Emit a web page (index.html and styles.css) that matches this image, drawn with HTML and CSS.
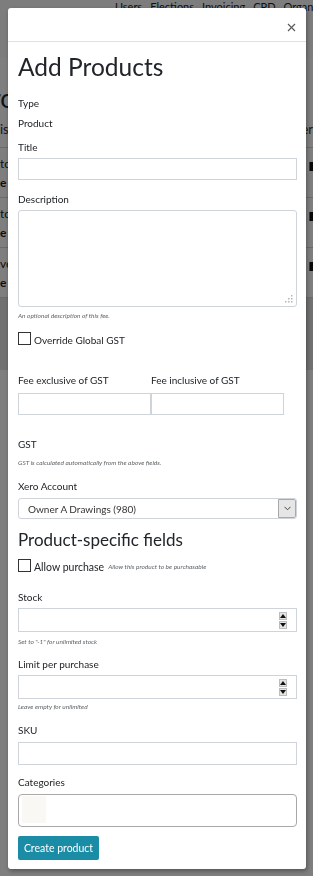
FILE: index.html
```html
<!DOCTYPE html>
<html lang="en">
<head>
<meta charset="utf-8">
<title>Add Products</title>
<link rel="stylesheet" href="styles.css">
</head>
<body>
<div class="page">
  <nav class="topnav">
    <span>Users</span><span>Elections</span><span>Invoicing</span><span>CPD</span><span>Organisations</span>
  </nav>
  <div class="page-head">
    <div class="page-title">Products</div>
    <div class="page-sub"><span>is</span><span>er</span></div>
  </div>
  <div class="rows">
    <div class="row"><div class="cell"><span>to</span><span>e</span></div><span class="trash"></span></div>
    <div class="row"><div class="cell"><span>to</span><span>e</span></div><span class="trash"></span></div>
    <div class="row"><div class="cell"><span>ve</span><span>e</span></div><span class="trash"></span></div>
  </div>
  <div class="band"></div>
</div>

<div class="backdrop"></div>

<div class="modal">
  <div class="modal-header">
    <svg class="close" width="9" height="9" viewBox="0 0 9 9"><path d="M1 1 L8 8 M8 1 L1 8" stroke="#5a5a5a" stroke-width="1.2" fill="none"/></svg>
  </div>
  <div class="modal-body">
    <h1 class="title">Add Products</h1>

    <div class="label mt-type">Type</div>
    <div class="label mt-product">Product</div>

    <div class="label mt-title">Title</div>
    <div class="input mt-4"></div>

    <div class="label mt-12">Description</div>
    <div class="textarea mt-4">
      <svg class="resizer" width="8" height="8" viewBox="0 0 8 8">
        <rect x="6" y="0" width="1.5" height="1.5" fill="#b5b5b5"/>
        <rect x="3" y="3" width="1.5" height="1.5" fill="#b5b5b5"/>
        <rect x="6" y="3" width="1.5" height="1.5" fill="#b5b5b5"/>
        <rect x="0" y="6" width="1.5" height="1.5" fill="#b5b5b5"/>
        <rect x="3" y="6" width="1.5" height="1.5" fill="#b5b5b5"/>
        <rect x="6" y="6" width="1.5" height="1.5" fill="#b5b5b5"/>
      </svg>
    </div>
    <div class="help mt-4">An optional description of this fee.</div>

    <div class="check-row mt-override"><span class="checkbox"></span><span class="check-label">Override Global GST</span></div>

    <div class="fee-grid">
      <div class="label">Fee exclusive of GST</div>
      <div class="label">Fee inclusive of GST</div>
      <div class="fee-input"></div>
      <div class="fee-input"></div>
    </div>

    <div class="label mt-gst">GST</div>
    <div class="help mt-gsthelp">GST is calculated automatically from the above fields.</div>

    <div class="label mt-11">Xero Account</div>
    <div class="select">
      <span class="select-text">Owner A Drawings (980)</span>
      <span class="select-arrow"><svg width="7" height="5" viewBox="0 0 7 5"><path d="M0.5 0.8 L3.5 3.8 L6.5 0.8" stroke="#444" stroke-width="1" fill="none"/></svg></span>
    </div>

    <h2 class="subtitle">Product-specific fields</h2>

    <div class="check-row mt-allow"><span class="checkbox"></span><span class="check-label big">Allow purchase</span><span class="help inline-help">Allow this product to be purchasable</span></div>

    <div class="label mt-stock">Stock</div>
    <div class="number mt-4">
      <span class="spinner"><span class="spin up"></span><span class="spin down"></span></span>
    </div>
    <div class="help mt-5">Set to "-1" for unlimited stock</div>

    <div class="label mt-10">Limit per purchase</div>
    <div class="number mt-4">
      <span class="spinner"><span class="spin up"></span><span class="spin down"></span></span>
    </div>
    <div class="help mt-3">Leave empty for unlimited</div>

    <div class="label mt-11">SKU</div>
    <div class="input tall mt-5"></div>

    <div class="label mt-10">Categories</div>
    <div class="categories"><span class="cat-chip"></span></div>

    <button class="btn">Create product</button>
  </div>
</div>
</body>
</html>
```

FILE: styles.css
```css
* { box-sizing: border-box; }
html, body { margin: 0; padding: 0; }
body {
  width: 313px;
  height: 876px;
  overflow: hidden;
  background: #ffffff;
  font-family: "Lato", "Open Sans", sans-serif;
  color: #212529;
}

/* background page */
.page { width: 313px; }
.topnav {
  height: 58px;
  background: #fbfbfb;
  display: flex;
  gap: 8px;
  padding: 0 0 0 115px;
  font-size: 11px;
  line-height: 14px;
  white-space: nowrap;
  overflow: hidden;
  color: #222;
}
.page-head { padding-top: 25px; height: 89px; }
.page-title {
  font-size: 26px;
  margin-left: -24px;
  line-height: 30px;
}
.page-sub {
  display: flex;
  justify-content: space-between;
  font-size: 13px;
  margin: 8px 0 0 0;
  color: #333;
}
.row {
  height: 50px;
  border-top: 1px solid #d6d6d6;
  display: flex;
  justify-content: space-between;
  align-items: flex-start;
}
.cell {
  display: flex;
  flex-direction: column;
  padding-top: 6px;
  font-size: 12px;
  line-height: 19px;
  color: #222;
}
.cell span:last-child { font-weight: bold; }
.trash {
  width: 8px;
  height: 9px;
  background: #111;
  border-left: 1px solid #a06a2a;
  margin: 14px -4px 0 0;
}
.band {
  height: 73px;
  background: #e3e3e3;
  border-top: 1px solid #d6d6d6;
}

.backdrop {
  position: fixed;
  inset: 0;
  background: rgba(0, 0, 0, 0.5);
}

/* modal */
.modal {
  position: absolute;
  left: 8px;
  top: 8px;
  width: 298px;
  background: #fff;
  border-radius: 3px;
  box-shadow: 1px 2px 4px rgba(0, 0, 0, 0.35);
}
.modal-header {
  height: 34px;
  border-bottom: 1px solid #dee2e6;
  display: flex;
  justify-content: flex-end;
  align-items: flex-start;
  padding: 15px 10px 0 0;
}
.modal-body {
  padding: 0 9px 9px 10px;
}
.title {
  margin: 10px 0 0 0;
  font-size: 24.5px;
  font-weight: 400;
  line-height: 30px;
}
.subtitle {
  margin: 10px 0 0 0;
  font-size: 17px;
  font-weight: 400;
  line-height: 22px;
}
.label {
  font-size: 10px;
  line-height: 14px;
  color: #212529;
}
.mt-type { margin-top: 14px; }
.mt-product { margin-top: 6px; }
.mt-title { margin-top: 10px; }
.mt-12 { margin-top: 12px; }
.mt-11 { margin-top: 11px; }
.mt-10 { margin-top: 10px; }
.mt-5 { margin-top: 5px; }
.mt-4 { margin-top: 4px; }
.mt-3 { margin-top: 3px; }
.mt-gst { margin-top: 22px; }
.mt-gsthelp { margin-top: 7px; }
.mt-stock { margin-top: 17px; }
.mt-override { margin-top: 10px; }
.mt-allow { margin-top: 7px; }

.input {
  height: 22px;
  border: 1px solid #cfd4da;
  background: #fff;
}
.input.tall { height: 23px; }
.textarea {
  height: 97px;
  border: 1px solid #cfd4da;
  border-radius: 3px;
  position: relative;
}
.resizer {
  position: absolute;
  right: 3px;
  bottom: 3px;
}
.help {
  font-size: 6.5px;
  line-height: 10px;
  font-style: italic;
  color: #5f6468;
}
.check-row {
  display: flex;
  align-items: center;
  height: 15px;
  gap: 3px;
}
.checkbox {
  width: 13px;
  height: 13px;
  border: 1px solid #333;
  background: #fff;
  flex: none;
}
.check-label {
  font-size: 10px;
  line-height: 14px;
  padding-top: 3px;
}
.check-label.big { font-size: 10.5px; }
.inline-help {
  padding-top: 3px;
  margin-left: 1px;
}
.fee-grid {
  display: grid;
  grid-template-columns: 133px 133px;
  row-gap: 6px;
  align-items: start;
  margin-top: 27px;
}
.fee-input {
  height: 22px;
  border: 1px solid #cfd4da;
}
.select {
  margin-top: 5px;
  height: 21px;
  border: 1px solid #cfd4da;
  border-radius: 3px;
  display: flex;
  align-items: center;
  overflow: hidden;
}
.select-text {
  flex: 1;
  font-size: 10px;
  padding-left: 9px;
  color: #333;
}
.select-arrow {
  width: 18px;
  align-self: stretch;
  background: #e6e6e6;
  border: 1px solid #a9a9a9;
  border-radius: 0 2px 2px 0;
  display: flex;
  align-items: center;
  justify-content: center;
}
.number {
  height: 24px;
  border: 1px solid #cfd4da;
  display: flex;
  justify-content: flex-end;
  align-items: center;
  padding-right: 9px;
}
.spinner {
  display: flex;
  flex-direction: column;
  width: 8px;
  height: 17px;
  gap: 1px;
}
.spin {
  flex: 1;
  background: #e4e4e4;
  border: 1px solid #bdbdbd;
  display: flex;
  align-items: center;
  justify-content: center;
}
.spin::after {
  content: "";
  border-left: 3px solid transparent;
  border-right: 3px solid transparent;
}
.spin.up::after { border-bottom: 4px solid #111; }
.spin.down::after { border-top: 4px solid #111; }

.categories {
  margin-top: 5px;
  height: 33px;
  border: 1px solid #a8a8a8;
  border-radius: 4px;
  padding: 1px 0 0 3px;
}
.cat-chip {
  display: block;
  width: 24px;
  height: 27px;
  background: #f9f8f5;
}
.btn {
  display: block;
  margin-top: 9px;
  height: 24px;
  width: 81px;
  padding: 0;
  border: none;
  border-radius: 2px;
  background: #1b8ca6;
  color: #fff;
  font-family: "Lato", "Open Sans", sans-serif;
  font-size: 10.5px;
}
```
